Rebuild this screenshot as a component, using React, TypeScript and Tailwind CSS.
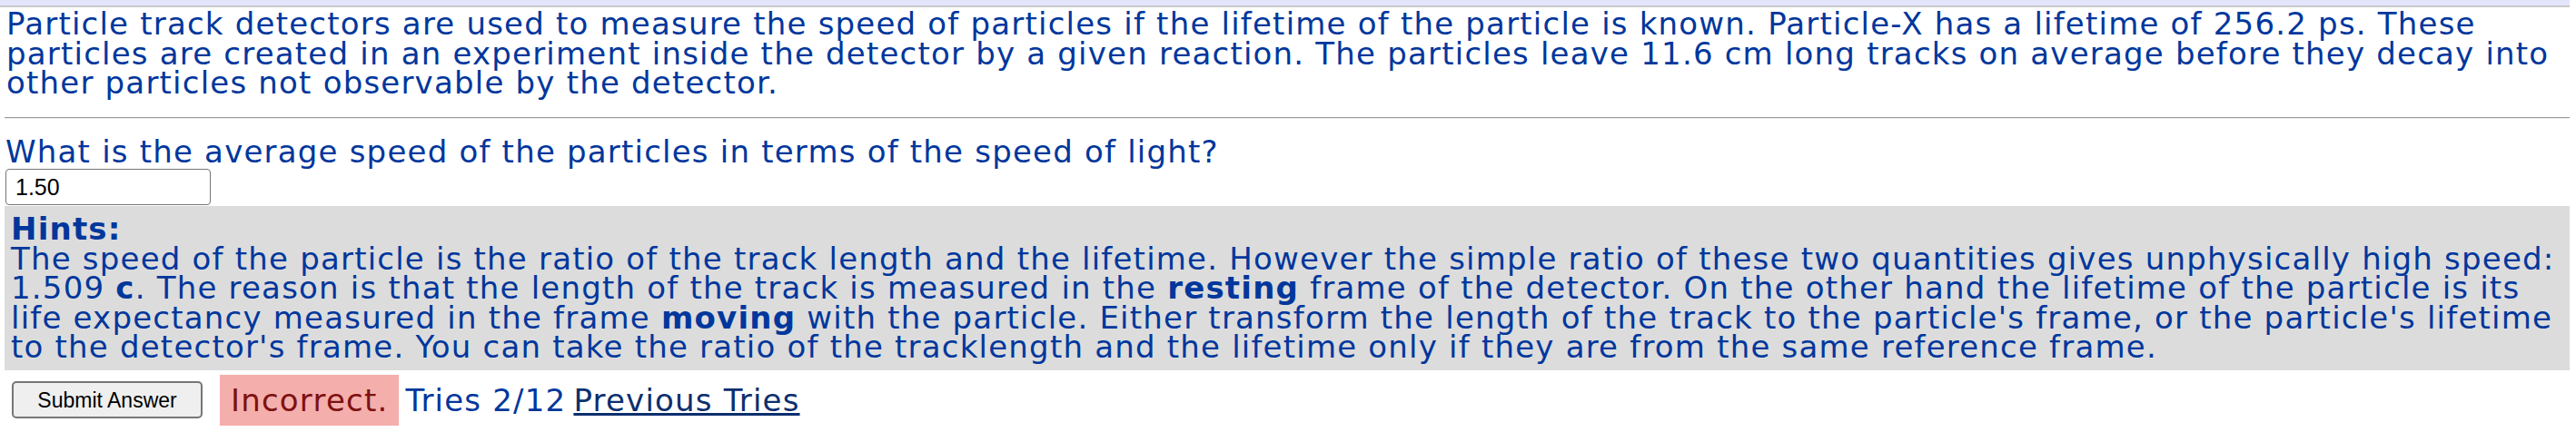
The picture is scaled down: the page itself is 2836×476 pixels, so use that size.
import React from 'react';

const HINT_PARTS = {
  a: 'The speed of the particle is the ratio of the track length and the lifetime. However the simple ratio of these two quantities gives unphysically high speed: 1.509 ',
  b: '. The reason is that the length of the track is measured in the ',
  c: ' frame of the detector. On the other hand the lifetime of the particle is its life expectancy measured in the frame ',
  d: " with the particle. Either transform the length of the track to the particle's frame, or the particle's lifetime to the detector's frame. You can take the ratio of the tracklength and the lifetime only if they are from the same reference frame.",
};

export default function App() {
  return (
    <div className="w-[2836px] h-[476px] bg-white overflow-hidden font-['DejaVu_Sans',sans-serif] text-[34px] leading-[32.5px] tracking-[1.2px] text-[#00379c]">
      {/* top band */}
      <div className="w-[2829px] h-[8px] bg-[#e3e5fb] border-b-2 border-[#c8c8c8]" />

      <div className="w-[2829px] pl-[5px]">
        <p className="mt-[2px] pl-[2px]">
          Particle track detectors are used to measure the speed of particles if the lifetime of the particle is known. Particle-X has a lifetime of 256.2 ps. These particles are created in an experiment inside the detector by a given reaction. The particles leave 11.6 cm long tracks on average before they decay into other particles not observable by the detector.
        </p>

        <div className="mt-[21px] h-[2px] border-t border-t-[#9a9a9a] border-b border-b-[#eeeeee]" />

        <p className="mt-[20px] pl-[1px]">What is the average speed of the particles in terms of the speed of light?</p>

        <input
          readOnly
          value="1.50"
          className="mt-[3px] ml-[1px] block w-[226px] h-[40px] px-[10px] border-[1.5px] border-[#767676] rounded-[4px] bg-white text-black font-['Liberation_Sans',Arial,sans-serif] text-[25px] tracking-normal"
        />

        <div className="mt-[1px] bg-[#dcdcdc] pt-[9px] pb-[9px] pl-[7px] pr-[6px]">
          <div className="font-bold">Hints:</div>
          <div>
            {HINT_PARTS.a}
            <b>c</b>
            {HINT_PARTS.b}
            <b>resting</b>
            {HINT_PARTS.c}
            <b>moving</b>
            {HINT_PARTS.d}
          </div>
        </div>

        <div className="mt-[5px] flex items-center">
          <button className="ml-[8px] w-[210px] h-[41px] bg-[#efefef] border-2 border-[#767676] rounded-[5px] text-black font-['Liberation_Sans',Arial,sans-serif] text-[23px] tracking-normal">
            Submit Answer
          </button>
          <span className="ml-[19px] bg-[#f4aeac] px-[12px] py-[12px] text-[#7d1111]">Incorrect.</span>
          <span className="ml-[7px]">Tries 2/12</span>
          <a href="#" className="ml-[8px] underline text-[#0c2f6e]">Previous Tries</a>
        </div>
      </div>
    </div>
  );
}
